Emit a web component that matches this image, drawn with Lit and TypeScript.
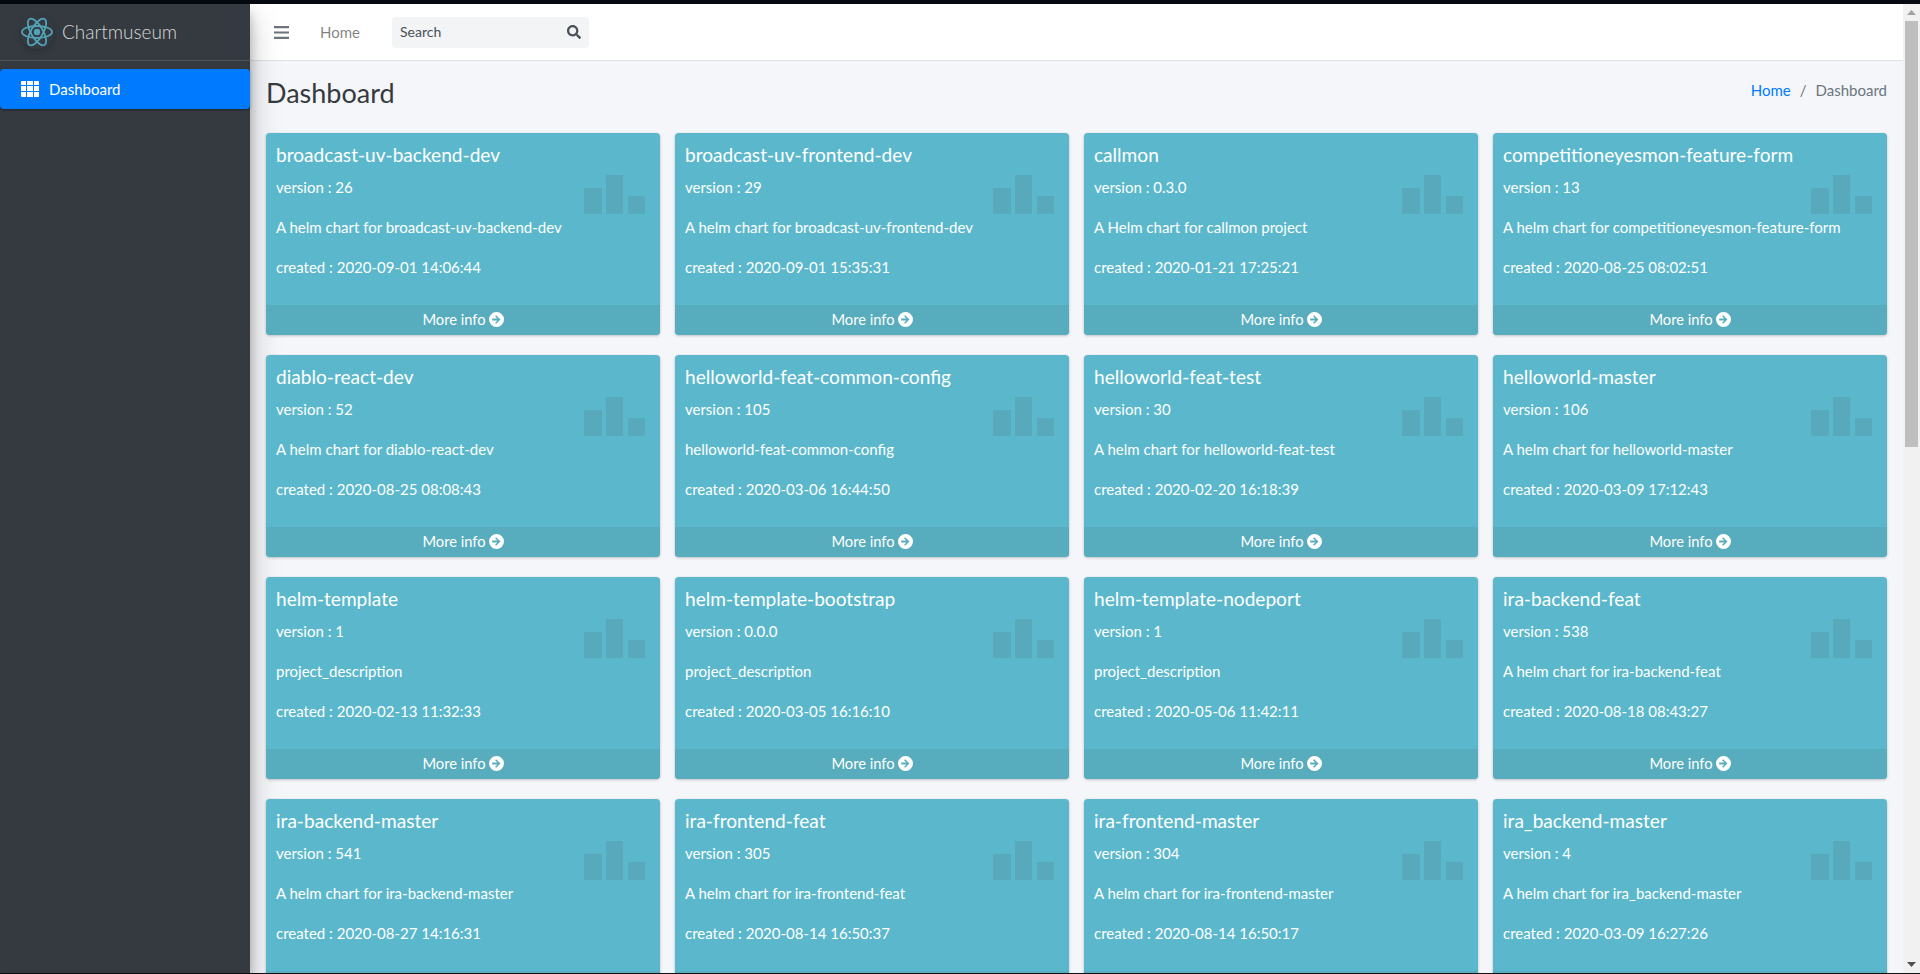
import { LitElement, html, css, svg } from "lit";
import { customElement } from "lit/decorators.js";

const charts = [
  ["broadcast-uv-backend-dev", "26", "A helm chart for broadcast-uv-backend-dev", "2020-09-01 14:06:44"],
  ["broadcast-uv-frontend-dev", "29", "A helm chart for broadcast-uv-frontend-dev", "2020-09-01 15:35:31"],
  ["callmon", "0.3.0", "A Helm chart for callmon project", "2020-01-21 17:25:21"],
  ["competitioneyesmon-feature-form", "13", "A helm chart for competitioneyesmon-feature-form", "2020-08-25 08:02:51"],
  ["diablo-react-dev", "52", "A helm chart for diablo-react-dev", "2020-08-25 08:08:43"],
  ["helloworld-feat-common-config", "105", "helloworld-feat-common-config", "2020-03-06 16:44:50"],
  ["helloworld-feat-test", "30", "A helm chart for helloworld-feat-test", "2020-02-20 16:18:39"],
  ["helloworld-master", "106", "A helm chart for helloworld-master", "2020-03-09 17:12:43"],
  ["helm-template", "1", "project_description", "2020-02-13 11:32:33"],
  ["helm-template-bootstrap", "0.0.0", "project_description", "2020-03-05 16:16:10"],
  ["helm-template-nodeport", "1", "project_description", "2020-05-06 11:42:11"],
  ["ira-backend-feat", "538", "A helm chart for ira-backend-feat", "2020-08-18 08:43:27"],
  ["ira-backend-master", "541", "A helm chart for ira-backend-master", "2020-08-27 14:16:31"],
  ["ira-frontend-feat", "305", "A helm chart for ira-frontend-feat", "2020-08-14 16:50:37"],
  ["ira-frontend-master", "304", "A helm chart for ira-frontend-master", "2020-08-14 16:50:17"],
  ["ira_backend-master", "4", "A helm chart for ira_backend-master", "2020-03-09 16:27:26"],
];

const atom = svg`<svg class="logo" viewBox="0 0 32 32" fill="none" stroke="#52a3b8" stroke-width="1.8">
  <circle cx="16" cy="16" r="3.2" fill="#52a3b8" stroke="none" />
  <ellipse cx="16" cy="16" rx="15" ry="6" />
  <ellipse cx="16" cy="16" rx="15" ry="6" transform="rotate(60 16 16)" />
  <ellipse cx="16" cy="16" rx="15" ry="6" transform="rotate(120 16 16)" />
</svg>`;

@customElement("app-root")
export class AppRoot extends LitElement {
  static styles = css`
    :host {
      display: flex;
      flex-direction: column;
      height: 974px;
      overflow: hidden;
      font-family: "Lato", "Open Sans", sans-serif;
      font-size: 15px;
      color: #212529;
      background: #05070c;
    }
    .strip-top {
      height: 4px;
      flex: none;
      background: #06090f;
    }
    .strip-bottom {
      height: 1px;
      flex: none;
      background: #111;
    }
    .window {
      flex: 1;
      min-height: 0;
      display: flex;
    }
    .sidebar {
      width: 250px;
      flex: none;
      background: #343a40;
      box-shadow: 0 14px 28px rgba(0, 0, 0, 0.25), 0 10px 10px rgba(0, 0, 0, 0.22);
      z-index: 2;
    }
    .brand {
      height: 57px;
      box-sizing: border-box;
      border-bottom: 1px solid #4b545c;
      display: flex;
      align-items: center;
      padding: 0 0 1px 20px;
      gap: 8px;
      color: rgba(255, 255, 255, 0.8);
      font-size: 19px;
      font-weight: 300;
    }
    .logo-wrap {
      width: 34px;
      height: 34px;
      border-radius: 50%;
      display: flex;
      align-items: center;
      justify-content: center;
      box-shadow: 0 3px 6px rgba(0, 0, 0, 0.16);
      flex: none;
    }
    .logo {
      width: 32px;
      height: 32px;
    }
    .menu-item {
      margin-top: 8px;
      height: 40px;
      background: #007bff;
      border-radius: 4px;
      color: #fff;
      display: flex;
      align-items: center;
      padding-left: 21px;
      gap: 10px;
      box-shadow: 0 1px 3px rgba(0, 0, 0, 0.12), 0 1px 2px rgba(0, 0, 0, 0.24);
    }
    .main {
      flex: 1;
      min-width: 0;
      display: flex;
      flex-direction: column;
      background: #f4f6f9;
    }
    .navbar {
      height: 57px;
      flex: none;
      box-sizing: border-box;
      background: #fff;
      border-bottom: 1px solid #dee2e6;
      display: flex;
      align-items: center;
      padding-left: 24px;
    }
    .burger {
      width: 15px;
      height: 13px;
      color: #6c757d;
    }
    .nav-link {
      margin-left: 31px;
      color: rgba(0, 0, 0, 0.5);
    }
    .search {
      margin-left: 32px;
      width: 197px;
      height: 31px;
      background: #f2f4f6;
      border-radius: 4px;
      display: flex;
      align-items: center;
      justify-content: space-between;
      padding: 0 8px 1px;
      box-sizing: border-box;
      font-size: 14px;
      color: #495057;
    }
    .search svg {
      width: 14px;
      height: 14px;
      color: #495057;
    }
    .content {
      flex: 1;
      min-height: 0;
      overflow: hidden;
      padding: 0 16px;
      position: relative;
      z-index: 3;
    }
    .header {
      height: 72px;
      box-sizing: border-box;
      padding-top: 15px;
      display: flex;
      align-items: flex-start;
      justify-content: space-between;
    }
    h1 {
      margin: 0;
      font-size: 27px;
      line-height: 34px;
      font-weight: 400;
      color: #343a40;
    }
    .crumbs {
      display: flex;
      gap: 9px;
      line-height: 24px;
      padding-top: 2px;
      color: #6c757d;
    }
    .crumbs a {
      color: #007bff;
    }
    .grid {
      display: grid;
      grid-template-columns: repeat(4, 1fr);
      column-gap: 15px;
      row-gap: 20px;
    }
    .card {
      position: relative;
      background: #5bb8cc;
      color: #fff;
      border-radius: 4px;
      box-shadow: 0 0 1px rgba(0, 0, 0, 0.125), 0 1px 3px rgba(0, 0, 0, 0.2);
      overflow: hidden;
    }
    .inner {
      padding: 10px;
    }
    .title {
      font-size: 19.1px;
      line-height: 23px;
      margin-bottom: 9px;
    }
    .line {
      line-height: 24px;
      margin-bottom: 16px;
    }
    .bars {
      position: absolute;
      top: 42px;
      right: 15px;
      width: 61px;
      height: 39px;
      fill: #57a9bb;
    }
    .more {
      height: 30px;
      box-sizing: border-box;
      padding-bottom: 2px;
      background: #57acbd;
      display: flex;
      align-items: center;
      justify-content: center;
      gap: 3px;
      font-size: 14.7px;
    }
    .more svg {
      width: 15px;
      height: 15px;
      fill: #fff;
    }
    .scrollbar {
      width: 17px;
      flex: none;
      background: #f1f1f1;
      display: flex;
      flex-direction: column;
      align-items: center;
      justify-content: space-between;
    }
    .arrow {
      height: 17px;
      display: flex;
      align-items: center;
      justify-content: center;
    }
    .arrow svg {
      width: 9px;
      height: 5px;
    }
    .thumb-track {
      flex: 1;
      width: 100%;
    }
    .thumb {
      width: 13px;
      height: 426px;
      margin: 0 auto;
      background: #bebebe;
    }
  `;

  card(c: string[]) {
    return html`<div class="card">
      <div class="inner">
        <div class="title">${c[0]}</div>
        <div class="line">version : ${c[1]}</div>
        <div class="line">${c[2]}</div>
        <div class="line">created : ${c[3]}</div>
      </div>
      <svg class="bars" viewBox="0 0 61 39">
        <rect x="0" y="13" width="18" height="26" />
        <rect x="22" y="0" width="17" height="39" />
        <rect x="44" y="21" width="17" height="18" />
      </svg>
      <div class="more">
        More info
        <svg viewBox="0 0 16 16">
          <path
            fill-rule="evenodd"
            d="M8 0a8 8 0 1 1 0 16A8 8 0 0 1 8 0zM7.600 3.400 6.500 4.500l2.400 2.400H3.400v2.200h5.500l-2.400 2.400 1.100 1.100 4.600-4.600z"
          />
        </svg>
      </div>
    </div>`;
  }

  render() {
    return html`
      <div class="strip-top"></div>
      <div class="window">
        <aside class="sidebar">
          <div class="brand">
            <span class="logo-wrap">${atom}</span>
            <span>Chartmuseum</span>
          </div>
          <div class="menu-item">
            <svg width="18" height="16" viewBox="0 0 18 16" fill="#fff">
              <path d="M0 1a1 1 0 0 1 1-1h4v4H0zM6 0h6v4H6zM13 0h4a1 1 0 0 1 1 1v3h-5zM0 5h5v5H0zM6 5h6v5H6zM13 5h5v5h-5zM0 11h5v5H1a1 1 0 0 1-1-1zM6 11h6v5H6zM13 11h5v4a1 1 0 0 1-1 1h-4z" />
            </svg>
            <span>Dashboard</span>
          </div>
        </aside>
        <div class="main">
          <nav class="navbar">
            <svg class="burger" viewBox="0 0 15 13" fill="currentColor">
              <path d="M0 0h15v2.200H0zM0 5.400h15v2.200H0zM0 10.800h15V13H0z" />
            </svg>
            <span class="nav-link">Home</span>
            <div class="search">
              <span>Search</span>
              <svg viewBox="0 0 512 512" fill="currentColor">
                <path d="M505 442.700 405.300 343c-4.500-4.500-10.600-7-17-7H372c27.600-35.300 44-79.700 44-128C416 93.100 322.900 0 208 0S0 93.100 0 208s93.100 208 208 208c48.300 0 92.700-16.400 128-44v16.300c0 6.400 2.500 12.500 7 17l99.700 99.700c9.400 9.400 24.600 9.400 33.900 0l28.300-28.300c9.400-9.400 9.400-24.600.1-34zM208 336c-70.700 0-128-57.200-128-128 0-70.700 57.200-128 128-128 70.700 0 128 57.200 128 128 0 70.700-57.200 128-128 128z" />
              </svg>
            </div>
          </nav>
          <div class="content">
            <div class="header">
              <h1>Dashboard</h1>
              <div class="crumbs"><a>Home</a><span>/</span><span>Dashboard</span></div>
            </div>
            <div class="grid">${charts.map((c) => this.card(c))}</div>
          </div>
        </div>
        <div class="scrollbar">
          <div class="arrow">
            <svg viewBox="0 0 9 5" fill="#a3a3a3"><path d="M4.500 0 9 5H0z" /></svg>
          </div>
          <div class="thumb-track"><div class="thumb"></div></div>
          <div class="arrow">
            <svg viewBox="0 0 9 5" fill="#505050"><path d="M0 0h9L4.500 5z" /></svg>
          </div>
        </div>
      </div>
      <div class="strip-bottom"></div>
    `;
  }
}
